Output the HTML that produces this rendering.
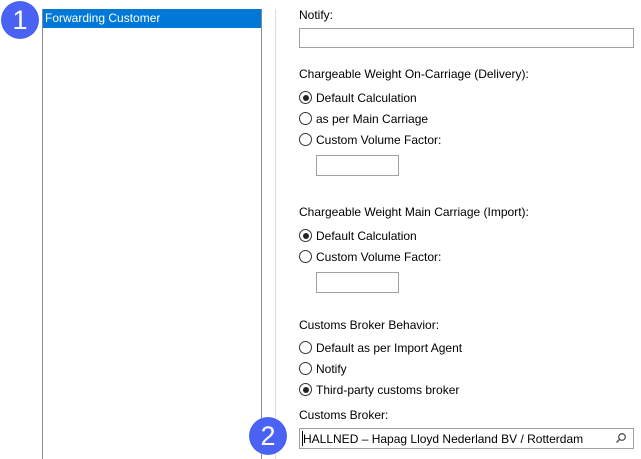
<!DOCTYPE html>
<html><head><style>
body{margin:0;width:641px;height:459px;background:#fff;position:relative;overflow:hidden;font-family:"Liberation Sans",sans-serif;font-size:12px;color:#000}
.a{position:absolute;white-space:nowrap}
.t{position:absolute;line-height:14px}
.r{position:absolute;width:11px;height:11px;border:1px solid #333;border-radius:50%;background:#fff}
.r.on::after{content:"";position:absolute;left:2.5px;top:2.5px;width:6px;height:6px;border-radius:50%;background:#222}
.box{position:absolute;border:1px solid #a0a0a0;background:#fff}
.c{position:absolute;width:38px;height:38px;border-radius:50%;background:#4a63f5;color:#fff;font-size:27px;text-align:center;line-height:38px}
</style></head><body>
<div class="a" style="left:42px;top:9px;width:1px;height:450px;background:#8a8a96"></div>
<div class="a" style="left:261px;top:9px;width:1px;height:450px;background:#8a8a96"></div>
<div class="a" style="left:275px;top:9px;width:1px;height:450px;background:#dcdcdc"></div>
<div class="a" style="left:43px;top:9px;width:218px;height:19px;background:#0078d7;color:#fff;line-height:19px;padding-left:2px;box-sizing:border-box">Forwarding Customer</div>
<div class="c" style="left:1px;top:1px">1</div>

<div class="t" style="left:299px;top:8px">Notify:</div>
<div class="box" style="left:299px;top:28px;width:333px;height:18px"></div>

<div class="t" style="left:299px;top:67px">Chargeable Weight On-Carriage (Delivery):</div>
<div class="r on" style="left:299px;top:91px"></div><div class="t" style="left:316px;top:91px">Default Calculation</div>
<div class="r" style="left:299px;top:112px"></div><div class="t" style="left:316px;top:112px">as per Main Carriage</div>
<div class="r" style="left:299px;top:133px"></div><div class="t" style="left:316px;top:133px">Custom Volume Factor:</div>
<div class="box" style="left:316px;top:155px;width:81px;height:19px"></div>

<div class="t" style="left:299px;top:205px">Chargeable Weight Main Carriage (Import):</div>
<div class="r on" style="left:299px;top:229px"></div><div class="t" style="left:316px;top:229px">Default Calculation</div>
<div class="r" style="left:299px;top:250px"></div><div class="t" style="left:316px;top:250px">Custom Volume Factor:</div>
<div class="box" style="left:316px;top:272px;width:81px;height:19px"></div>

<div class="t" style="left:299px;top:318px">Customs Broker Behavior:</div>
<div class="r" style="left:299px;top:341px"></div><div class="t" style="left:316px;top:341px">Default as per Import Agent</div>
<div class="r" style="left:299px;top:362px"></div><div class="t" style="left:316px;top:362px">Notify</div>
<div class="r on" style="left:299px;top:383px"></div><div class="t" style="left:316px;top:383px">Third-party customs broker</div>

<div class="t" style="left:299px;top:408px">Customs Broker:</div>
<div class="box" style="left:299px;top:428px;width:333px;height:19px"></div>
<div class="a" style="left:302px;top:431px;width:1px;height:15px;background:#000"></div>
<div class="t" style="left:303px;top:432px;font-size:12px">HALLNED – Hapag Lloyd Nederland BV / Rotterdam</div>
<svg class="a" style="left:615px;top:432px" width="12" height="12" viewBox="0 0 12 12"><circle cx="7" cy="5" r="3.3" fill="none" stroke="#555" stroke-width="1.3"/><line x1="4.6" y1="7.4" x2="1.5" y2="10.5" stroke="#555" stroke-width="1.5"/></svg>
<div class="c" style="left:249px;top:417px">2</div>
</body></html>
